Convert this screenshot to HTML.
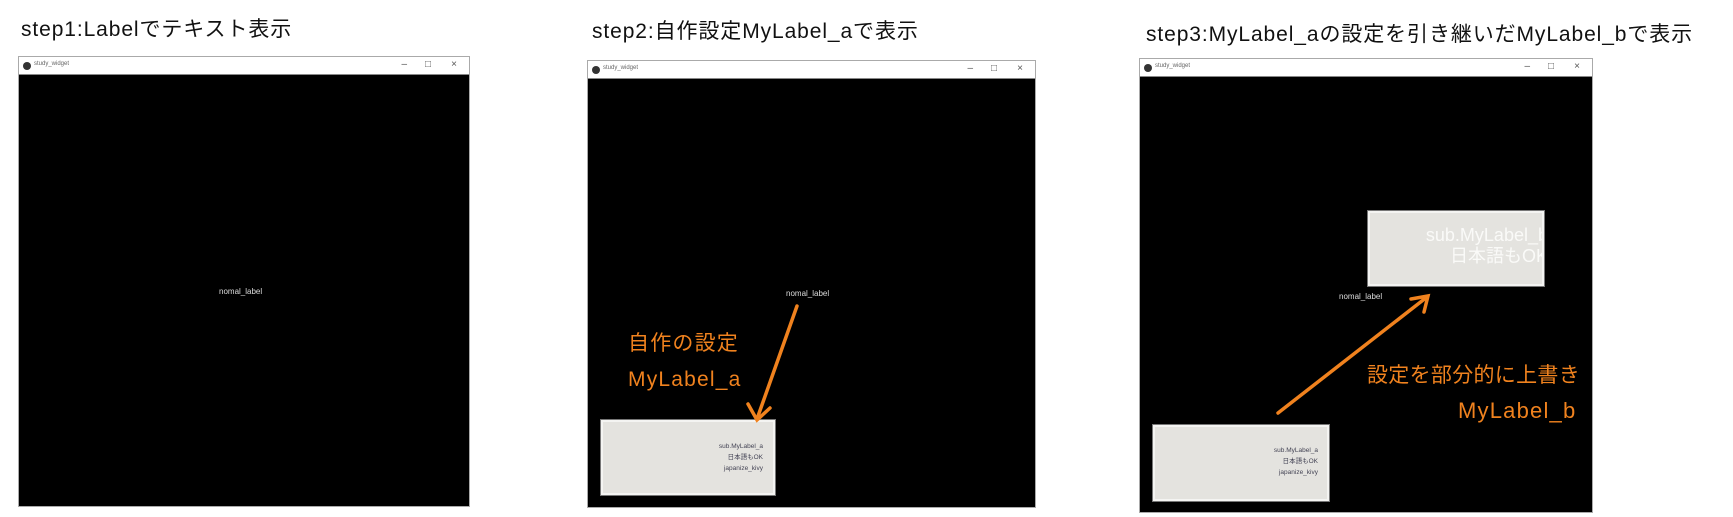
<!DOCTYPE html>
<html><head><meta charset="utf-8"><style>
*{margin:0;padding:0;box-sizing:border-box}
body{width:1733px;height:517px;background:#fff;position:relative;overflow:hidden;font-family:"Liberation Sans","Noto Sans CJK JP",sans-serif}
.t{position:absolute;font-size:21px;color:#111;white-space:nowrap;line-height:24px;letter-spacing:0.9px}
.win{position:absolute;border:1px solid #aaa;background:#000}
.bar{position:absolute;left:0;right:0;top:0;height:18px;background:#fff;border-bottom:1px solid #888}
.bar .ic{position:absolute;left:4px;top:5px;width:8px;height:8px;border-radius:50%;background:#333}
.bar .nm{position:absolute;left:15px;top:4px;font-size:6px;color:#666}
.bar .b{position:absolute;top:2px;font-size:10px;color:#555}
.nl{position:absolute;font-size:8px;color:#ddd;white-space:nowrap}
.box{position:absolute;background:#e4e3df;border:2px solid #f4f4f2;outline:1px solid #777}
.bt{position:absolute;font-size:6.5px;color:#445;text-align:right;line-height:11px;white-space:nowrap}
.or{position:absolute;color:#f0821e;white-space:nowrap;font-size:21px;line-height:24px;letter-spacing:1.2px}
</style></head><body>
<div class="t" style="left:21px;top:18px">step1:Labelでテキスト表示</div>
<div class="t" style="left:592px;top:20px">step2:自作設定MyLabel_aで表示</div>
<div class="t" style="left:1146px;top:23px">step3:MyLabel_aの設定を引き継いだMyLabel_bで表示</div>

<div class="win" style="left:18px;top:56px;width:452px;height:451px">
<div class="bar"><div class="ic"></div><div class="nm">study_widget</div><div class="b" style="right:62px">–</div><div class="b" style="right:38px">□</div><div class="b" style="right:12px">×</div></div>
<div class="nl" style="left:200px;top:230px">nomal_label</div>
</div>

<div class="win" style="left:587px;top:60px;width:449px;height:448px">
<div class="bar"><div class="ic"></div><div class="nm">study_widget</div><div class="b" style="right:62px">–</div><div class="b" style="right:38px">□</div><div class="b" style="right:12px">×</div></div>
<div class="nl" style="left:198px;top:228px">nomal_label</div>
<div class="box" style="left:13px;top:359px;width:174px;height:75px"></div>
<div class="bt" style="left:60px;top:380px;width:115px">sub.MyLabel_a<br>日本語もOK<br>japanize_kivy</div>
<div class="or" style="left:40px;top:271px">自作の設定</div>
<div class="or" style="left:40px;top:307px">MyLabel_a</div>
</div>

<div class="win" style="left:1139px;top:58px;width:454px;height:455px">
<div class="bar"><div class="ic"></div><div class="nm">study_widget</div><div class="b" style="right:62px">–</div><div class="b" style="right:38px">□</div><div class="b" style="right:12px">×</div></div>
<div class="nl" style="left:199px;top:233px">nomal_label</div>
<div class="box" style="left:13px;top:366px;width:176px;height:76px"></div>
<div class="bt" style="left:60px;top:386px;width:118px">sub.MyLabel_a<br>日本語もOK<br>japanize_kivy</div>
<div class="box" style="left:228px;top:152px;width:176px;height:75px;overflow:hidden">
<div style="position:absolute;right:-6px;top:12px;font-size:18px;color:#fafaf8;line-height:21px;text-align:right;white-space:nowrap">sub.MyLabel_b<br>日本語もOK</div></div>
<div class="or" style="left:227px;top:305px;letter-spacing:0.3px">設定を部分的に上書き</div>
<div class="or" style="left:318px;top:340px;font-size:22px">MyLabel_b</div>
</div>

<svg style="position:absolute;left:0;top:0" width="1733" height="517">
<g stroke="#f0821e" stroke-width="3.5" fill="none" stroke-linecap="round">
<line x1="797" y1="306" x2="757" y2="419"/>
<polyline points="748,404 757,420 770,408"/>
<line x1="1278" y1="413" x2="1427" y2="297"/>
<polyline points="1411,299 1428,296 1424,312"/>
</g></svg>
</body></html>
